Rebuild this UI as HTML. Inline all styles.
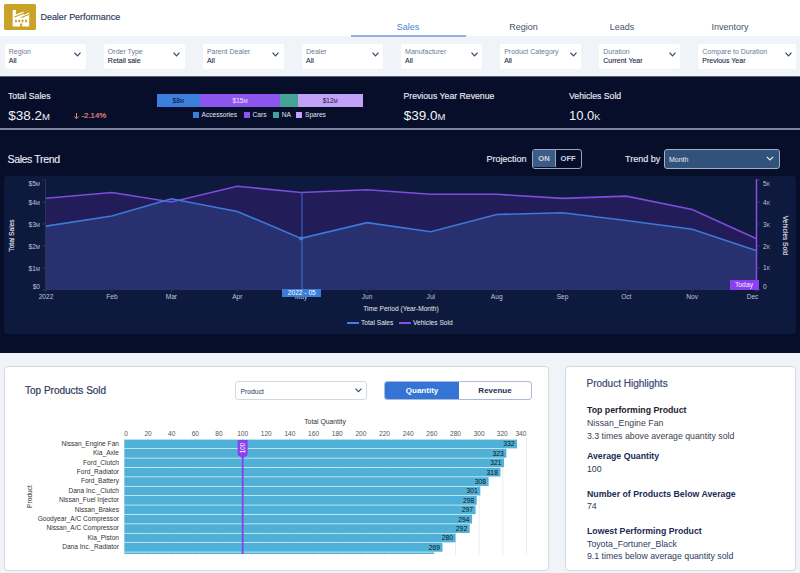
<!DOCTYPE html><html><head><meta charset='utf-8'><style>
*{margin:0;padding:0;box-sizing:border-box}
html,body{width:800px;height:573px;overflow:hidden;background:#f0f3f8;font-family:"Liberation Sans", sans-serif}
.a{position:absolute;white-space:nowrap}
.d{-webkit-text-stroke:0.15px currentColor}
</style></head><body>
<div class='a' style='left:0;top:0;width:800px;height:36px;background:#fff'></div>
<div class='a' style='left:4.3px;top:3.8px;width:32px;height:26.2px;background:#c9a227;border-radius:1.5px'></div>
<svg class='a' style='left:0;top:0' width='40' height='34' viewBox='0 0 40 34'>
<path d='M12.7 9.9 H15.9 V14.6 L23.5 11.6 V14.9 L29.2 12.6 V26.6 H12.7 Z' fill='#fff'/>
<path d='M14.6 16.9 L23.2 13.4 M21.6 17.4 L28.6 14.6' stroke='#c9a227' stroke-width='1.1' stroke-linecap='round'/>
<rect x='15' y='19.8' width='1.9' height='2.4' rx='0.5' fill='#c9a227'/><rect x='18.2' y='19.8' width='1.9' height='2.4' rx='0.5' fill='#c9a227'/>
<rect x='21.6' y='19.8' width='1.9' height='2.4' rx='0.5' fill='#c9a227'/><rect x='25' y='19.8' width='1.9' height='2.4' rx='0.5' fill='#c9a227'/>
<rect x='20' y='23.5' width='2.2' height='3.2' fill='#c9a227'/>
</svg>
<div class='a' style='left:40.5px;top:11px;font-size:9px;line-height:12px;color:#2c3a5c;letter-spacing:-0.05px;-webkit-text-stroke:0.15px #2c3a5c'>Dealer Performance</div>
<div class='a' style='left:358px;top:20.5px;width:100px;text-align:center;font-size:9px;line-height:12px;color:#4a80d8'>Sales</div>
<div class='a' style='left:473.5px;top:20.5px;width:100px;text-align:center;font-size:9px;line-height:12px;color:#46526e'>Region</div>
<div class='a' style='left:572px;top:20.5px;width:100px;text-align:center;font-size:9px;line-height:12px;color:#46526e'>Leads</div>
<div class='a' style='left:680px;top:20.5px;width:100px;text-align:center;font-size:9px;line-height:12px;color:#46526e'>Inventory</div>
<div class='a' style='left:350.5px;top:35px;width:115.5px;height:1.5px;background:#8fb0e6'></div>
<div class='a' style='left:4.5px;top:44px;width:81px;height:25px;background:#fff;border-radius:2px'></div>
<div class='a' style='left:8.8px;top:47px;font-size:7px;line-height:9px;color:#6b7a99'>Region</div>
<div class='a' style='left:8.8px;top:55.5px;font-size:7px;line-height:9px;color:#1a2747;-webkit-text-stroke:0.1px #1a2747'>All</div>
<svg class='a' style='left:74.3px;top:52.3px' width='7' height='5' viewBox='0 0 7 5'><path d='M0.5 0.6 L3.5 3.8 L6.5 0.6' stroke='#3a4870' stroke-width='1.2' fill='none'/></svg>
<div class='a' style='left:103.57px;top:44px;width:81px;height:25px;background:#fff;border-radius:2px'></div>
<div class='a' style='left:107.86999999999999px;top:47px;font-size:7px;line-height:9px;color:#6b7a99'>Order Type</div>
<div class='a' style='left:107.86999999999999px;top:55.5px;font-size:7px;line-height:9px;color:#1a2747;-webkit-text-stroke:0.1px #1a2747'>Retail sale</div>
<svg class='a' style='left:173.37px;top:52.3px' width='7' height='5' viewBox='0 0 7 5'><path d='M0.5 0.6 L3.5 3.8 L6.5 0.6' stroke='#3a4870' stroke-width='1.2' fill='none'/></svg>
<div class='a' style='left:202.64px;top:44px;width:81px;height:25px;background:#fff;border-radius:2px'></div>
<div class='a' style='left:206.94px;top:47px;font-size:7px;line-height:9px;color:#6b7a99'>Parent Dealer</div>
<div class='a' style='left:206.94px;top:55.5px;font-size:7px;line-height:9px;color:#1a2747;-webkit-text-stroke:0.1px #1a2747'>All</div>
<svg class='a' style='left:272.44px;top:52.3px' width='7' height='5' viewBox='0 0 7 5'><path d='M0.5 0.6 L3.5 3.8 L6.5 0.6' stroke='#3a4870' stroke-width='1.2' fill='none'/></svg>
<div class='a' style='left:301.71px;top:44px;width:81px;height:25px;background:#fff;border-radius:2px'></div>
<div class='a' style='left:306.01px;top:47px;font-size:7px;line-height:9px;color:#6b7a99'>Dealer</div>
<div class='a' style='left:306.01px;top:55.5px;font-size:7px;line-height:9px;color:#1a2747;-webkit-text-stroke:0.1px #1a2747'>All</div>
<svg class='a' style='left:371.51px;top:52.3px' width='7' height='5' viewBox='0 0 7 5'><path d='M0.5 0.6 L3.5 3.8 L6.5 0.6' stroke='#3a4870' stroke-width='1.2' fill='none'/></svg>
<div class='a' style='left:400.78px;top:44px;width:81px;height:25px;background:#fff;border-radius:2px'></div>
<div class='a' style='left:405.08px;top:47px;font-size:7px;line-height:9px;color:#6b7a99'>Manufacturer</div>
<div class='a' style='left:405.08px;top:55.5px;font-size:7px;line-height:9px;color:#1a2747;-webkit-text-stroke:0.1px #1a2747'>All</div>
<svg class='a' style='left:470.58px;top:52.3px' width='7' height='5' viewBox='0 0 7 5'><path d='M0.5 0.6 L3.5 3.8 L6.5 0.6' stroke='#3a4870' stroke-width='1.2' fill='none'/></svg>
<div class='a' style='left:499.84999999999997px;top:44px;width:81px;height:25px;background:#fff;border-radius:2px'></div>
<div class='a' style='left:504.15px;top:47px;font-size:7px;line-height:9px;color:#6b7a99'>Product Category</div>
<div class='a' style='left:504.15px;top:55.5px;font-size:7px;line-height:9px;color:#1a2747;-webkit-text-stroke:0.1px #1a2747'>All</div>
<svg class='a' style='left:569.6499999999999px;top:52.3px' width='7' height='5' viewBox='0 0 7 5'><path d='M0.5 0.6 L3.5 3.8 L6.5 0.6' stroke='#3a4870' stroke-width='1.2' fill='none'/></svg>
<div class='a' style='left:598.92px;top:44px;width:81px;height:25px;background:#fff;border-radius:2px'></div>
<div class='a' style='left:603.2199999999999px;top:47px;font-size:7px;line-height:9px;color:#6b7a99'>Duration</div>
<div class='a' style='left:603.2199999999999px;top:55.5px;font-size:7px;line-height:9px;color:#1a2747;-webkit-text-stroke:0.1px #1a2747'>Current Year</div>
<svg class='a' style='left:668.7199999999999px;top:52.3px' width='7' height='5' viewBox='0 0 7 5'><path d='M0.5 0.6 L3.5 3.8 L6.5 0.6' stroke='#3a4870' stroke-width='1.2' fill='none'/></svg>
<div class='a' style='left:697.99px;top:44px;width:98px;height:25px;background:#fff;border-radius:2px'></div>
<div class='a' style='left:702.29px;top:47px;font-size:7px;line-height:9px;color:#6b7a99'>Compare to Duration</div>
<div class='a' style='left:702.29px;top:55.5px;font-size:7px;line-height:9px;color:#1a2747;-webkit-text-stroke:0.1px #1a2747'>Previous Year</div>
<svg class='a' style='left:784.79px;top:52.3px' width='7' height='5' viewBox='0 0 7 5'><path d='M0.5 0.6 L3.5 3.8 L6.5 0.6' stroke='#3a4870' stroke-width='1.2' fill='none'/></svg>
<div class='a' style='left:0;top:76px;width:800px;height:277.3px;background:#070e2a'></div>
<div class='a' style='left:0;top:76px;width:800px;height:1px;background:#5a6078'></div>
<div class='a d' style='left:8px;top:91px;font-size:8.7px;line-height:11px;color:#e6e8f0'>Total Sales</div>
<div class='a' style='left:8.2px;top:108px;font-size:13.5px;line-height:16px;color:#f2f3f8'>$38.2<span style='font-size:9.5px'>M</span></div>
<svg class='a' style='left:73px;top:112px' width='7' height='8' viewBox='0 0 7 8'><path d='M3.5 1 V6.6 M1.2 4.4 L3.5 6.7 L5.8 4.4' stroke='#e0857a' stroke-width='1' fill='none'/></svg>
<div class='a' style='left:81.5px;top:111px;font-size:7.8px;line-height:9px;color:#e0857a;-webkit-text-stroke:0.2px #e0857a'>-2.14%</div>
<div class='a' style='left:156.5px;top:93.7px;width:43.5px;height:13.4px;background:#3d7fdc;font-size:6.5px;line-height:13.5px;text-align:center;color:#070e2a'>$8<span style="font-size:5px">M</span></div>
<div class='a' style='left:200px;top:93.7px;width:80.19999999999999px;height:13.4px;background:#8b55ee;font-size:6.5px;line-height:13.5px;text-align:center;color:#f0eaff'>$15<span style="font-size:5px">M</span></div>
<div class='a' style='left:280.2px;top:93.7px;width:17.400000000000034px;height:13.4px;background:#43a597;font-size:6.5px;line-height:13.5px;text-align:center;color:'></div>
<div class='a' style='left:297.6px;top:93.7px;width:65.19999999999999px;height:13.4px;background:#c2a2f6;font-size:6.5px;line-height:13.5px;text-align:center;color:#1a1440'>$12<span style="font-size:5px">M</span></div>
<div class='a' style='left:192.5px;top:111.6px;width:6px;height:6px;background:#3d7fdc'></div>
<div class='a' style='left:201.5px;top:109.8px;font-size:6.6px;line-height:9px;color:#e2e5f0'>Accessories</div>
<div class='a' style='left:243.6px;top:111.6px;width:6px;height:6px;background:#8b55ee'></div>
<div class='a' style='left:252.6px;top:109.8px;font-size:6.6px;line-height:9px;color:#e2e5f0'>Cars</div>
<div class='a' style='left:272.7px;top:111.6px;width:6px;height:6px;background:#43a597'></div>
<div class='a' style='left:281.7px;top:109.8px;font-size:6.6px;line-height:9px;color:#e2e5f0'>NA</div>
<div class='a' style='left:296px;top:111.6px;width:6px;height:6px;background:#c2a2f6'></div>
<div class='a' style='left:305px;top:109.8px;font-size:6.6px;line-height:9px;color:#e2e5f0'>Spares</div>
<div class='a d' style='left:403.5px;top:91px;font-size:8.7px;line-height:11px;color:#e6e8f0'>Previous Year Revenue</div>
<div class='a' style='left:403.8px;top:108px;font-size:13.5px;line-height:16px;color:#f2f3f8'>$39.0<span style='font-size:9.5px'>M</span></div>
<div class='a d' style='left:569px;top:91px;font-size:8.7px;line-height:11px;color:#e6e8f0'>Vehicles Sold</div>
<div class='a' style='left:569px;top:108px;font-size:13px;line-height:16px;color:#f2f3f8'>10.0<span style='font-size:9px'>K</span></div>
<div class='a' style='left:0;top:128.3px;width:800px;height:1.5px;background:#7e849c'></div>
<div class='a d' style='left:7.5px;top:153.3px;font-size:10.6px;letter-spacing:-0.4px;line-height:12px;color:#e6e8f0'>Sales Trend</div>
<div class='a d' style='left:486.5px;top:153.5px;font-size:9px;line-height:11px;color:#e6e8f0'>Projection</div>
<div class='a' style='left:532px;top:149.2px;width:49.5px;height:19.6px;border:1.2px solid #9aa4bc;border-radius:3px;background:#070e2a;overflow:hidden'><div class='a' style='left:0;top:0;width:22px;height:17.2px;background:#3b5c86;color:#d0d7e2;font-size:7.6px;font-weight:bold;line-height:17.6px;text-align:center'>ON</div><div class='a' style='left:22px;top:0;width:1px;height:17.2px;background:#9aa4bc'></div><div class='a' style='left:23px;top:0;width:24.3px;height:17.2px;color:#d0d7e2;font-size:7.6px;font-weight:bold;line-height:17.6px;text-align:center'>OFF</div></div>
<div class='a d' style='left:625px;top:153.5px;font-size:9px;line-height:11px;color:#e6e8f0'>Trend by</div>
<div class='a' style='left:664px;top:149px;width:116px;height:19.5px;border:1px solid #a3afc4;border-radius:3px;background:#31527a'></div>
<div class='a' style='left:669px;top:154.5px;font-size:7px;line-height:9px;color:#e8edf5'>Month</div>
<svg class='a' style='left:766px;top:156px' width='8' height='5' viewBox='0 0 8 5'><path d='M0.8 0.8 L4 4 L7.2 0.8' stroke='#e8edf5' stroke-width='1.2' fill='none'/></svg>
<div class='a' style='left:3.75px;top:175.5px;width:792px;height:158px;background:#0e1a3d;border-radius:4px'></div>
<svg class='a' style='left:0;top:0' width='800' height='573' viewBox='0 0 800 573'><polygon points='46,290 46,198.3 111.9,192.5 171.4,202 237.3,186.2 301.1,192.5 367,189.7 430.8,194.25 496.7,194.25 562.5,198.4 626.3,196.1 692.2,209.4 756,238.4 756,290' fill='#221d58'/><polygon points='46,290 46,226.1 111.9,216 171.4,198.8 237.3,211.4 301.1,238.4 367,222.6 430.8,231.7 496.7,214.5 562.5,212.8 626.3,220.5 692.2,229.3 756,250.4 756,290' fill='#283070'/><line x1='45.5' y1='180' x2='45.5' y2='290' stroke='#2a3658' stroke-width='1'/><line x1='42' y1='180' x2='46' y2='180' stroke='#2a3658' stroke-width='1'/><line x1='42' y1='202' x2='46' y2='202' stroke='#2a3658' stroke-width='1'/><line x1='42' y1='224' x2='46' y2='224' stroke='#2a3658' stroke-width='1'/><line x1='42' y1='246' x2='46' y2='246' stroke='#2a3658' stroke-width='1'/><line x1='42' y1='268' x2='46' y2='268' stroke='#2a3658' stroke-width='1'/><line x1='42' y1='290' x2='46' y2='290' stroke='#2a3658' stroke-width='1'/><polyline points='46,198.3 111.9,192.5 171.4,202 237.3,186.2 301.1,192.5 367,189.7 430.8,194.25 496.7,194.25 562.5,198.4 626.3,196.1 692.2,209.4 756,238.4' fill='none' stroke='#7f4cdc' stroke-width='1.6'/><polyline points='46,226.1 111.9,216 171.4,198.8 237.3,211.4 301.1,238.4 367,222.6 430.8,231.7 496.7,214.5 562.5,212.8 626.3,220.5 692.2,229.3 756,250.4' fill='none' stroke='#3c79d8' stroke-width='1.6'/><line x1='756.5' y1='179' x2='756.5' y2='290' stroke='#8a4fe6' stroke-width='1.5'/><line x1='757' y1='180' x2='760' y2='180' stroke='#2a3658' stroke-width='1'/><line x1='757' y1='202' x2='760' y2='202' stroke='#2a3658' stroke-width='1'/><line x1='757' y1='224' x2='760' y2='224' stroke='#2a3658' stroke-width='1'/><line x1='757' y1='246' x2='760' y2='246' stroke='#2a3658' stroke-width='1'/><line x1='757' y1='268' x2='760' y2='268' stroke='#2a3658' stroke-width='1'/><line x1='757' y1='290' x2='760' y2='290' stroke='#2a3658' stroke-width='1'/><line x1='302' y1='192.5' x2='302' y2='290' stroke='#3a70cc' stroke-width='1'/><circle cx='301.1' cy='238.4' r='2' fill='#3f7fe0'/><line x1='46' y1='290' x2='46' y2='292.5' stroke='#2a3658' stroke-width='1'/><line x1='111.9' y1='290' x2='111.9' y2='292.5' stroke='#2a3658' stroke-width='1'/><line x1='171.4' y1='290' x2='171.4' y2='292.5' stroke='#2a3658' stroke-width='1'/><line x1='237.3' y1='290' x2='237.3' y2='292.5' stroke='#2a3658' stroke-width='1'/><line x1='301.1' y1='290' x2='301.1' y2='292.5' stroke='#2a3658' stroke-width='1'/><line x1='367' y1='290' x2='367' y2='292.5' stroke='#2a3658' stroke-width='1'/><line x1='430.8' y1='290' x2='430.8' y2='292.5' stroke='#2a3658' stroke-width='1'/><line x1='496.7' y1='290' x2='496.7' y2='292.5' stroke='#2a3658' stroke-width='1'/><line x1='562.5' y1='290' x2='562.5' y2='292.5' stroke='#2a3658' stroke-width='1'/><line x1='626.3' y1='290' x2='626.3' y2='292.5' stroke='#2a3658' stroke-width='1'/><line x1='692.2' y1='290' x2='692.2' y2='292.5' stroke='#2a3658' stroke-width='1'/><line x1='756' y1='290' x2='756' y2='292.5' stroke='#2a3658' stroke-width='1'/></svg>
<div class='a' style='left:0;top:179.1px;width:40px;text-align:right;font-size:6.6px;line-height:9px;color:#bfc6da'>$5<span style='font-size:5px'>M</span></div>
<div class='a' style='left:0;top:197.5px;width:40px;text-align:right;font-size:6.6px;line-height:9px;color:#bfc6da'>$4<span style='font-size:5px'>M</span></div>
<div class='a' style='left:0;top:219.5px;width:40px;text-align:right;font-size:6.6px;line-height:9px;color:#bfc6da'>$3<span style='font-size:5px'>M</span></div>
<div class='a' style='left:0;top:241.5px;width:40px;text-align:right;font-size:6.6px;line-height:9px;color:#bfc6da'>$2<span style='font-size:5px'>M</span></div>
<div class='a' style='left:0;top:263.5px;width:40px;text-align:right;font-size:6.6px;line-height:9px;color:#bfc6da'>$1<span style='font-size:5px'>M</span></div>
<div class='a' style='left:0;top:281.8px;width:40px;text-align:right;font-size:6.6px;line-height:9px;color:#bfc6da'>$0</div>
<div class='a' style='left:763px;top:178.9px;font-size:6.6px;line-height:9px;color:#bfc6da'>5<span style='font-size:5px'>K</span></div>
<div class='a' style='left:763px;top:197.5px;font-size:6.6px;line-height:9px;color:#bfc6da'>4<span style='font-size:5px'>K</span></div>
<div class='a' style='left:763px;top:219.9px;font-size:6.6px;line-height:9px;color:#bfc6da'>3<span style='font-size:5px'>K</span></div>
<div class='a' style='left:763px;top:241.8px;font-size:6.6px;line-height:9px;color:#bfc6da'>2<span style='font-size:5px'>K</span></div>
<div class='a' style='left:763px;top:262.9px;font-size:6.6px;line-height:9px;color:#bfc6da'>1<span style='font-size:5px'>K</span></div>
<div class='a' style='left:763px;top:281.9px;font-size:6.6px;line-height:9px;color:#bfc6da'>0</div>
<div class='a' style='left:26px;top:291.5px;width:40px;text-align:center;font-size:6.6px;line-height:9px;color:#bfc6da'>2022</div>
<div class='a' style='left:91.9px;top:291.5px;width:40px;text-align:center;font-size:6.6px;line-height:9px;color:#bfc6da'>Feb</div>
<div class='a' style='left:151.4px;top:291.5px;width:40px;text-align:center;font-size:6.6px;line-height:9px;color:#bfc6da'>Mar</div>
<div class='a' style='left:217.3px;top:291.5px;width:40px;text-align:center;font-size:6.6px;line-height:9px;color:#bfc6da'>Apr</div>
<div class='a' style='left:281.1px;top:291.5px;width:40px;text-align:center;font-size:6.6px;line-height:9px;color:#bfc6da'>May</div>
<div class='a' style='left:347px;top:291.5px;width:40px;text-align:center;font-size:6.6px;line-height:9px;color:#bfc6da'>Jun</div>
<div class='a' style='left:410.8px;top:291.5px;width:40px;text-align:center;font-size:6.6px;line-height:9px;color:#bfc6da'>Jul</div>
<div class='a' style='left:476.7px;top:291.5px;width:40px;text-align:center;font-size:6.6px;line-height:9px;color:#bfc6da'>Aug</div>
<div class='a' style='left:542.5px;top:291.5px;width:40px;text-align:center;font-size:6.6px;line-height:9px;color:#bfc6da'>Sep</div>
<div class='a' style='left:606.3px;top:291.5px;width:40px;text-align:center;font-size:6.6px;line-height:9px;color:#bfc6da'>Oct</div>
<div class='a' style='left:672.2px;top:291.5px;width:40px;text-align:center;font-size:6.6px;line-height:9px;color:#bfc6da'>Nov</div>
<div class='a' style='left:732.5px;top:291.5px;width:40px;text-align:center;font-size:6.6px;line-height:9px;color:#bfc6da'>Dec</div>
<div class='a' style='left:10.6px;top:235px;width:0;height:0'><div style='position:absolute;left:-25px;top:-4.5px;width:50px;text-align:center;font-size:6.6px;line-height:9px;color:#e6e8f0;transform:rotate(-90deg);transform-origin:25px 4.5px;white-space:nowrap;-webkit-text-stroke:0.1px #e6e8f0'>Total Sales</div></div>
<div class='a' style='left:784.5px;top:235px;width:0;height:0'><div style='position:absolute;left:-25px;top:-4.5px;width:50px;text-align:center;font-size:6.6px;line-height:9px;color:#e6e8f0;transform:rotate(90deg);transform-origin:25px 4.5px;white-space:nowrap;-webkit-text-stroke:0.1px #e6e8f0'>Vehicles Sold</div></div>
<div class='a' style='left:282.3px;top:288.7px;width:39px;height:8.5px;background:#3b7ed8;color:#fff;font-size:6.6px;line-height:8.5px;text-align:center'>2022 - 05</div>
<div class='a' style='left:730px;top:279.8px;width:29px;height:10.3px;background:#8a3ff0;color:#f4eeff;font-size:6.8px;line-height:10.3px;text-align:center;padding-right:1px'>Today</div>
<div class='a' style='left:351px;top:303.5px;width:100px;text-align:center;font-size:6.6px;line-height:9px;color:#e6e8f0'>Time Period (Year-Month)</div>
<div class='a' style='left:346.5px;top:321.8px;width:12px;height:2px;background:#3f7fe0'></div>
<div class='a' style='left:361px;top:318px;font-size:6.6px;line-height:9px;color:#e6e8f0'>Total Sales</div>
<div class='a' style='left:399px;top:321.8px;width:12px;height:2px;background:#8a4fe6'></div>
<div class='a' style='left:413px;top:318px;font-size:6.6px;line-height:9px;color:#e6e8f0'>Vehicles Sold</div>
<div class='a' style='left:4px;top:366.3px;width:544.5px;height:204.7px;background:#fff;border:1px solid #d5d9e0;border-radius:4px'></div>
<div class='a' style='left:564.8px;top:366px;width:231.7px;height:204.5px;background:#fff;border:1px solid #d5d9e0;border-radius:4px'></div>
<div class='a' style='left:25px;top:384.5px;font-size:10px;line-height:12px;color:#2c3a5c;-webkit-text-stroke:0.2px #2c3a5c'>Top Products Sold</div>
<div class='a' style='left:235.4px;top:380.5px;width:132px;height:19.7px;border:1px solid #d3d9e4;border-radius:3px;background:#fff'></div>
<div class='a' style='left:240.5px;top:387px;font-size:6.8px;line-height:9px;color:#2c3a5c'>Product</div>
<svg class='a' style='left:355px;top:388px' width='7' height='5' viewBox='0 0 7 5'><path d='M0.5 0.6 L3.5 3.6 L6.5 0.6' stroke='#3a4870' stroke-width='1.1' fill='none'/></svg>
<div class='a' style='left:384.3px;top:380.5px;width:148px;height:19.7px;border:1px solid #aabbd8;border-radius:3px;background:#fff;overflow:hidden'><div class='a' style='left:0;top:0;width:73.5px;height:17.7px;background:#3474d4;color:#fff;font-size:8px;font-weight:bold;line-height:17.7px;text-align:center'>Quantity</div><div class='a' style='left:73.5px;top:0;width:72.5px;height:17.7px;color:#1f2c4d;font-size:8px;font-weight:bold;line-height:17.7px;text-align:center'>Revenue</div></div>
<div class='a' style='left:586.5px;top:378px;font-size:10px;line-height:12px;color:#3a4870;-webkit-text-stroke:0.2px #3a4870'>Product Highlights</div>
<div class='a' style='left:280px;top:416.5px;width:90px;text-align:center;font-size:6.8px;line-height:9px;color:#333'>Total Quantity</div>
<svg class='a' style='left:0;top:0' width='800' height='573' viewBox='0 0 800 573'><line x1='124.4' y1='438' x2='124.4' y2='555' stroke='#e3e6ec' stroke-width='0.8'/><line x1='148.05' y1='438' x2='148.05' y2='555' stroke='#e3e6ec' stroke-width='0.8'/><line x1='171.70000000000002' y1='438' x2='171.70000000000002' y2='555' stroke='#e3e6ec' stroke-width='0.8'/><line x1='195.35000000000002' y1='438' x2='195.35000000000002' y2='555' stroke='#e3e6ec' stroke-width='0.8'/><line x1='219.0' y1='438' x2='219.0' y2='555' stroke='#e3e6ec' stroke-width='0.8'/><line x1='242.65000000000003' y1='438' x2='242.65000000000003' y2='555' stroke='#e3e6ec' stroke-width='0.8'/><line x1='266.3' y1='438' x2='266.3' y2='555' stroke='#e3e6ec' stroke-width='0.8'/><line x1='289.95000000000005' y1='438' x2='289.95000000000005' y2='555' stroke='#e3e6ec' stroke-width='0.8'/><line x1='313.6' y1='438' x2='313.6' y2='555' stroke='#e3e6ec' stroke-width='0.8'/><line x1='337.25' y1='438' x2='337.25' y2='555' stroke='#e3e6ec' stroke-width='0.8'/><line x1='360.90000000000003' y1='438' x2='360.90000000000003' y2='555' stroke='#e3e6ec' stroke-width='0.8'/><line x1='384.55000000000007' y1='438' x2='384.55000000000007' y2='555' stroke='#e3e6ec' stroke-width='0.8'/><line x1='408.20000000000005' y1='438' x2='408.20000000000005' y2='555' stroke='#e3e6ec' stroke-width='0.8'/><line x1='431.85' y1='438' x2='431.85' y2='555' stroke='#e3e6ec' stroke-width='0.8'/><line x1='455.5' y1='438' x2='455.5' y2='555' stroke='#e3e6ec' stroke-width='0.8'/><line x1='479.1500000000001' y1='438' x2='479.1500000000001' y2='555' stroke='#e3e6ec' stroke-width='0.8'/><line x1='502.80000000000007' y1='438' x2='502.80000000000007' y2='555' stroke='#e3e6ec' stroke-width='0.8'/><line x1='526.45' y1='438' x2='526.45' y2='555' stroke='#e3e6ec' stroke-width='0.8'/><defs><clipPath id='c1'><rect x='0' y='0' width='800' height='554'/></clipPath></defs><g clip-path='url(#c1)'><rect x='124.4' y='439.6' width='392.59000000000003' height='8.75' fill='#4fb1d8'/><rect x='124.4' y='449.0' width='381.94750000000005' height='8.75' fill='#4fb1d8'/><rect x='124.4' y='458.40000000000003' width='379.58250000000004' height='8.75' fill='#4fb1d8'/><rect x='124.4' y='467.8' width='376.035' height='8.75' fill='#4fb1d8'/><rect x='124.4' y='477.20000000000005' width='364.21000000000004' height='8.75' fill='#4fb1d8'/><rect x='124.4' y='486.6' width='355.9325' height='8.75' fill='#4fb1d8'/><rect x='124.4' y='496.0' width='352.38500000000005' height='8.75' fill='#4fb1d8'/><rect x='124.4' y='505.40000000000003' width='351.20250000000004' height='8.75' fill='#4fb1d8'/><rect x='124.4' y='514.8000000000001' width='347.65500000000003' height='8.75' fill='#4fb1d8'/><rect x='124.4' y='524.2' width='345.29' height='8.75' fill='#4fb1d8'/><rect x='124.4' y='533.6' width='331.1' height='8.75' fill='#4fb1d8'/><rect x='124.4' y='543.0' width='318.09250000000003' height='8.75' fill='#4fb1d8'/><rect x='124.4' y='552.4000000000001' width='309.81500000000005' height='8.75' fill='#4fb1d8'/></g><line x1='242.65000000000003' y1='448' x2='242.65000000000003' y2='554' stroke='#8a3ff0' stroke-width='1.8'/><path d='M237.65000000000003 440 H247.65000000000003 V455 L242.65000000000003 458.5 L237.65000000000003 455 Z' fill='#8a3ff0'/></svg>
<div class='a' style='left:242.95000000000005px;top:447.5px;width:0;height:0'><div style='position:absolute;left:-10px;top:-4px;width:20px;height:8px;text-align:center;font-size:6.3px;line-height:8px;color:#fff;transform:rotate(-90deg);transform-origin:10px 4px'>100</div></div>
<div class='a' style='left:111.2px;top:428.5px;width:30px;text-align:center;font-size:6.6px;line-height:9px;color:#555'>0</div>
<div class='a' style='left:133.05px;top:428.5px;width:30px;text-align:center;font-size:6.6px;line-height:9px;color:#555'>20</div>
<div class='a' style='left:156.70000000000002px;top:428.5px;width:30px;text-align:center;font-size:6.6px;line-height:9px;color:#555'>40</div>
<div class='a' style='left:180.35000000000002px;top:428.5px;width:30px;text-align:center;font-size:6.6px;line-height:9px;color:#555'>60</div>
<div class='a' style='left:204.0px;top:428.5px;width:30px;text-align:center;font-size:6.6px;line-height:9px;color:#555'>80</div>
<div class='a' style='left:227.65000000000003px;top:428.5px;width:30px;text-align:center;font-size:6.6px;line-height:9px;color:#555'>100</div>
<div class='a' style='left:251.3px;top:428.5px;width:30px;text-align:center;font-size:6.6px;line-height:9px;color:#555'>120</div>
<div class='a' style='left:274.95000000000005px;top:428.5px;width:30px;text-align:center;font-size:6.6px;line-height:9px;color:#555'>140</div>
<div class='a' style='left:298.6px;top:428.5px;width:30px;text-align:center;font-size:6.6px;line-height:9px;color:#555'>160</div>
<div class='a' style='left:322.25px;top:428.5px;width:30px;text-align:center;font-size:6.6px;line-height:9px;color:#555'>180</div>
<div class='a' style='left:345.90000000000003px;top:428.5px;width:30px;text-align:center;font-size:6.6px;line-height:9px;color:#555'>200</div>
<div class='a' style='left:369.55000000000007px;top:428.5px;width:30px;text-align:center;font-size:6.6px;line-height:9px;color:#555'>220</div>
<div class='a' style='left:393.20000000000005px;top:428.5px;width:30px;text-align:center;font-size:6.6px;line-height:9px;color:#555'>240</div>
<div class='a' style='left:416.85px;top:428.5px;width:30px;text-align:center;font-size:6.6px;line-height:9px;color:#555'>260</div>
<div class='a' style='left:440.5px;top:428.5px;width:30px;text-align:center;font-size:6.6px;line-height:9px;color:#555'>280</div>
<div class='a' style='left:464.1500000000001px;top:428.5px;width:30px;text-align:center;font-size:6.6px;line-height:9px;color:#555'>300</div>
<div class='a' style='left:487.30000000000007px;top:428.5px;width:30px;text-align:center;font-size:6.6px;line-height:9px;color:#555'>320</div>
<div class='a' style='left:505.95000000000005px;top:428.5px;width:30px;text-align:center;font-size:6.6px;line-height:9px;color:#555'>340</div>
<div class='a' style='left:0;top:438.8px;width:119px;text-align:right;font-size:6.6px;line-height:9px;color:#333'>Nissan_Engine Fan</div>
<div class='a' style='left:484.49px;top:439.3px;width:30px;text-align:right;font-size:6.8px;line-height:9px;color:#111'>332</div>
<div class='a' style='left:0;top:448.2px;width:119px;text-align:right;font-size:6.6px;line-height:9px;color:#333'>Kia_Axle</div>
<div class='a' style='left:473.8475000000001px;top:448.7px;width:30px;text-align:right;font-size:6.8px;line-height:9px;color:#111'>323</div>
<div class='a' style='left:0;top:457.6px;width:119px;text-align:right;font-size:6.6px;line-height:9px;color:#333'>Ford_Clutch</div>
<div class='a' style='left:471.4825000000001px;top:458.1px;width:30px;text-align:right;font-size:6.8px;line-height:9px;color:#111'>321</div>
<div class='a' style='left:0;top:467.0px;width:119px;text-align:right;font-size:6.6px;line-height:9px;color:#333'>Ford_Radiator</div>
<div class='a' style='left:467.93500000000006px;top:467.5px;width:30px;text-align:right;font-size:6.8px;line-height:9px;color:#111'>318</div>
<div class='a' style='left:0;top:476.40000000000003px;width:119px;text-align:right;font-size:6.6px;line-height:9px;color:#333'>Ford_Battery</div>
<div class='a' style='left:456.11px;top:476.90000000000003px;width:30px;text-align:right;font-size:6.8px;line-height:9px;color:#111'>308</div>
<div class='a' style='left:0;top:485.8px;width:119px;text-align:right;font-size:6.6px;line-height:9px;color:#333'>Dana Inc._Clutch</div>
<div class='a' style='left:447.8325px;top:486.3px;width:30px;text-align:right;font-size:6.8px;line-height:9px;color:#111'>301</div>
<div class='a' style='left:0;top:495.2px;width:119px;text-align:right;font-size:6.6px;line-height:9px;color:#333'>Nissan_Fuel Injector</div>
<div class='a' style='left:444.2850000000001px;top:495.7px;width:30px;text-align:right;font-size:6.8px;line-height:9px;color:#111'>298</div>
<div class='a' style='left:0;top:504.6px;width:119px;text-align:right;font-size:6.6px;line-height:9px;color:#333'>Nissan_Brakes</div>
<div class='a' style='left:443.1025000000001px;top:505.1px;width:30px;text-align:right;font-size:6.8px;line-height:9px;color:#111'>297</div>
<div class='a' style='left:0;top:514.0000000000001px;width:119px;text-align:right;font-size:6.6px;line-height:9px;color:#333'>Goodyear_A/C Compressor</div>
<div class='a' style='left:439.55500000000006px;top:514.5000000000001px;width:30px;text-align:right;font-size:6.8px;line-height:9px;color:#111'>294</div>
<div class='a' style='left:0;top:523.4000000000001px;width:119px;text-align:right;font-size:6.6px;line-height:9px;color:#333'>Nissan_A/C Compressor</div>
<div class='a' style='left:437.19000000000005px;top:523.9000000000001px;width:30px;text-align:right;font-size:6.8px;line-height:9px;color:#111'>292</div>
<div class='a' style='left:0;top:532.8000000000001px;width:119px;text-align:right;font-size:6.6px;line-height:9px;color:#333'>Kia_Piston</div>
<div class='a' style='left:423.0px;top:533.3000000000001px;width:30px;text-align:right;font-size:6.8px;line-height:9px;color:#111'>280</div>
<div class='a' style='left:0;top:542.2px;width:119px;text-align:right;font-size:6.6px;line-height:9px;color:#333'>Dana Inc._Radiator</div>
<div class='a' style='left:409.99250000000006px;top:542.7px;width:30px;text-align:right;font-size:6.8px;line-height:9px;color:#111'>269</div>
<div class='a' style='left:29px;top:496px;width:0;height:0'><div style='position:absolute;left:-20px;top:-4.5px;width:40px;text-align:center;font-size:6.6px;line-height:9px;color:#333;transform:rotate(-90deg);transform-origin:20px 4.5px'>Product</div></div>
<div class='a' style='left:587px;top:405.3px;font-size:8.75px;line-height:11px;font-weight:bold;color:#1e2230'>Top performing Product</div>
<div class='a' style='left:587px;top:417.8px;font-size:8.75px;line-height:11px;font-weight:normal;color:#3a3f50'>Nissan_Engine Fan</div>
<div class='a' style='left:587px;top:430.5px;font-size:8.75px;line-height:11px;font-weight:normal;color:#3a3f50'>3.3 times above average quantity sold</div>
<div class='a' style='left:587px;top:451.1px;font-size:8.75px;line-height:11px;font-weight:bold;color:#1c2a55'>Average Quantity</div>
<div class='a' style='left:587px;top:463.8px;font-size:8.75px;line-height:11px;font-weight:normal;color:#2e3a5e'>100</div>
<div class='a' style='left:587px;top:488.6px;font-size:8.75px;line-height:11px;font-weight:bold;color:#1c2a55'>Number of Products Below Average</div>
<div class='a' style='left:587px;top:501.3px;font-size:8.75px;line-height:11px;font-weight:normal;color:#2e3a5e'>74</div>
<div class='a' style='left:587px;top:526.0999999999999px;font-size:8.75px;line-height:11px;font-weight:bold;color:#1c2a55'>Lowest Performing Product</div>
<div class='a' style='left:587px;top:538.8px;font-size:8.75px;line-height:11px;font-weight:normal;color:#2e3a5e'>Toyota_Fortuner_Black</div>
<div class='a' style='left:587px;top:551.3px;font-size:8.75px;line-height:11px;font-weight:normal;color:#2e3a5e'>9.1 times below average quantity sold</div>
</body></html>
